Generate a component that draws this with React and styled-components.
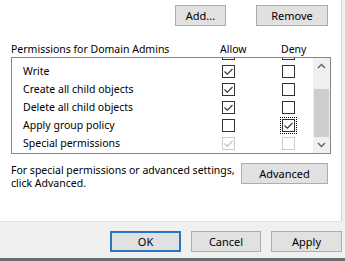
import styled, { createGlobalStyle } from "styled-components";

const GlobalStyle = createGlobalStyle`
  html, body {
    margin: 0;
    padding: 0;
    background: #f0f0f0;
  }
  body {
    font-family: "Noto Sans", "Liberation Sans", sans-serif;
    font-size: 10.5px;
    color: #000;
  }
`;

const Ventana = styled.div`
  width: 345px;
  height: 261px;
  display: flex;
  flex-direction: column;
  background: #f0f0f0;
  overflow: hidden;
`;

const Panel = styled.div`
  width: 342px;
  height: 222px;
  box-sizing: border-box;
  background: #fff;
  border-right: 1px solid #d9d9d9;
  border-bottom: 1px solid #e3e3e3;
  display: flex;
  flex-direction: column;
  padding: 5px 0 0 11px;
`;

const FilaBotones = styled.div`
  display: flex;
  justify-content: flex-end;
  gap: 30px;
  padding-right: 13px;
`;

const Boton = styled.button`
  box-sizing: border-box;
  flex-shrink: 0;
  width: ${(p) => p.$ancho || 72}px;
  height: ${(p) => p.$alto || 21}px;
  background: #e1e1e1;
  border: ${(p) => (p.$defecto ? "2px solid #2a74c0" : "1px solid #adadad")};
  font-family: inherit;
  font-size: 11px;
  color: #000;
  padding: 0;
  display: flex;
  align-items: center;
  justify-content: center;
`;

const Cabecera = styled.div`
  display: grid;
  grid-template-columns: 209px 61px 1fr;
  margin-top: 14px;
  height: 17px;
  align-items: center;
  white-space: nowrap;
`;

const Lista = styled.div`
  width: 320px;
  height: 97px;
  box-sizing: border-box;
  border: 1px solid #828790;
  display: flex;
  overflow: hidden;
`;

const Ventanilla = styled.div`
  flex: 1;
  overflow: hidden;
`;

const Filas = styled.div`
  margin-top: ${(p) => -p.$desplazamiento}px;
`;

const Fila = styled.div`
  display: grid;
  grid-template-columns: 199px 60px 1fr;
  height: 18px;
  align-items: center;
  padding-left: 11px;
  white-space: nowrap;
`;

const Casilla = styled.div`
  width: 13px;
  height: 13px;
  box-sizing: border-box;
  border: 1px solid ${(p) => (p.$inactiva ? "#cccccc" : "#333333")};
  background: #fff;
  display: flex;
  align-items: center;
  justify-content: center;
  outline: ${(p) => (p.$foco ? "1px dotted #000" : "none")};
  outline-offset: 1px;
`;

const Barra = styled.div`
  width: 17px;
  background: #f0f0f0;
  display: flex;
  flex-direction: column;
`;

const Flecha = styled.div`
  height: 17px;
  display: flex;
  align-items: center;
  justify-content: center;
`;

const Pista = styled.div`
  flex: 1;
  display: flex;
  flex-direction: column;
  padding: 14px 0 0;
`;

const Pulgar = styled.div`
  height: 48px;
  margin: 0 1px;
  background: #cdcdcd;
`;

const Nota = styled.div`
  display: flex;
  align-items: flex-start;
  justify-content: space-between;
  padding-right: 13px;
  margin-top: 9px;
  line-height: 13px;
`;

const NotaTexto = styled.div`
  padding-top: 1px;
  white-space: nowrap;
`;

const Pie = styled.div`
  flex: 1;
  display: flex;
  justify-content: flex-end;
  align-items: flex-start;
  gap: 10px;
  padding: 9px 3px 0 0;
  border-bottom: 3px solid #6d6d6d;
`;

const Marca = ({ color = "#333" }) => (
  <svg width="11" height="11" viewBox="0 0 11 11">
    <path d="M1.5 5.5 L4.3 8.2 L9.5 3" fill="none" stroke={color} strokeWidth="1.1" />
  </svg>
);

const Chevron = ({ abajo }) => (
  <svg width="9" height="6" viewBox="0 0 9 6">
    <path
      d={abajo ? "M1 1 L4.5 4.5 L8 1" : "M1 5 L4.5 1.5 L8 5"}
      fill="none"
      stroke="#606060"
      strokeWidth="1.4"
    />
  </svg>
);

const permisos = [
  { nombre: "", permitir: true, denegar: false },
  { nombre: "Write", permitir: true, denegar: false },
  { nombre: "Create all child objects", permitir: true, denegar: false },
  { nombre: "Delete all child objects", permitir: true, denegar: false },
  { nombre: "Apply group policy", permitir: false, denegar: true, foco: true },
  { nombre: "Special permissions", permitir: true, denegar: false, inactiva: true },
];

const App = () => (
  <>
    <GlobalStyle />
    <Ventana>
      <Panel>
        <FilaBotones>
          <Boton $ancho={51}>Add...</Boton>
          <Boton>Remove</Boton>
        </FilaBotones>
        <Cabecera>
          <span>Permissions for Domain Admins</span>
          <span>Allow</span>
          <span>Deny</span>
        </Cabecera>
        <Lista>
          <Ventanilla>
            <Filas $desplazamiento={14}>
              {permisos.map((p, i) => (
                <Fila key={i}>
                  <span>{p.nombre}</span>
                  <Casilla $inactiva={p.inactiva}>
                    {p.permitir && <Marca color={p.inactiva ? "#bdbdbd" : "#333"} />}
                  </Casilla>
                  <Casilla $inactiva={p.inactiva} $foco={p.foco}>
                    {p.denegar && <Marca />}
                  </Casilla>
                </Fila>
              ))}
            </Filas>
          </Ventanilla>
          <Barra>
            <Flecha>
              <Chevron />
            </Flecha>
            <Pista>
              <Pulgar />
            </Pista>
            <Flecha>
              <Chevron abajo />
            </Flecha>
          </Barra>
        </Lista>
        <Nota>
          <NotaTexto>
            For special permissions or advanced settings,
            <br />
            click Advanced.
          </NotaTexto>
          <Boton $ancho={87}>Advanced</Boton>
        </Nota>
      </Panel>
      <Pie>
        <Boton $ancho={71} $defecto>OK</Boton>
        <Boton $ancho={70}>Cancel</Boton>
        <Boton $ancho={71}>Apply</Boton>
      </Pie>
    </Ventana>
  </>
);

export default App;
